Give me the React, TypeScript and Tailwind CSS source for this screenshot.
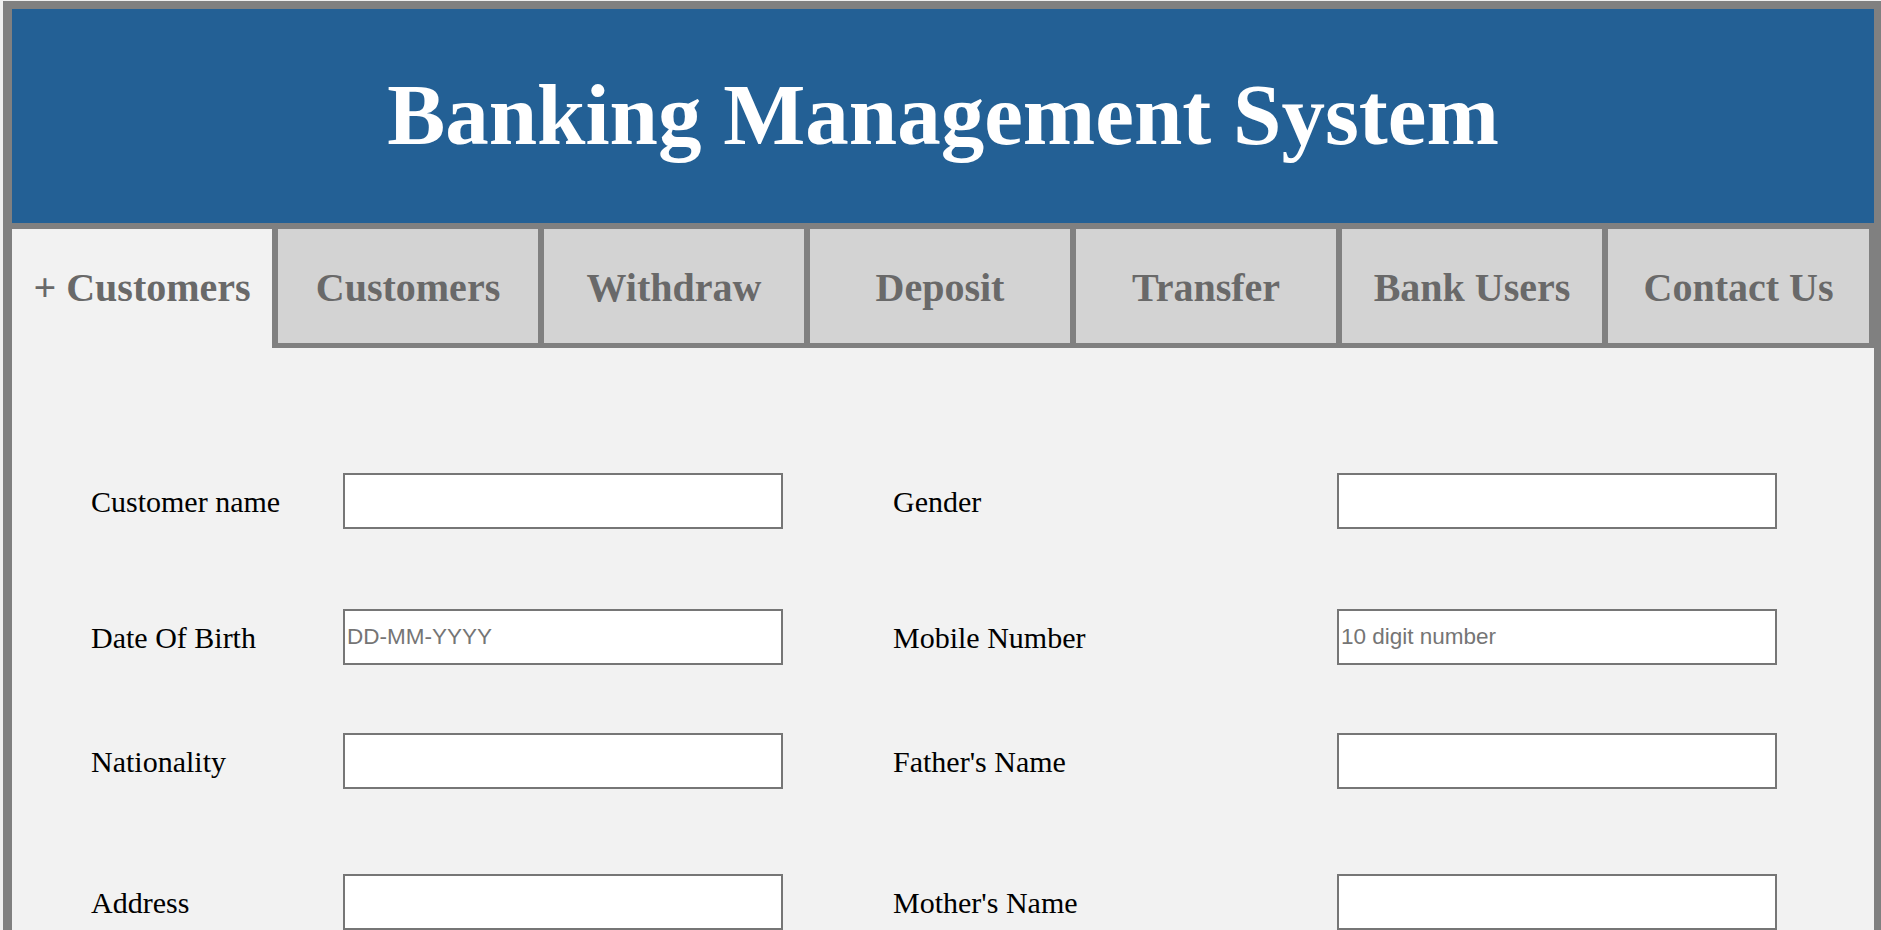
import React from "react";

const serif = { fontFamily: '"Liberation Serif", "Times New Roman", serif' };

const tabs = ["Customers", "Withdraw", "Deposit", "Transfer", "Bank Users"];

function Field({ label, placeholder, labelW }: { label: string; placeholder?: string; labelW: string }) {
  return (
    <div className="flex items-center h-[56px]">
      <div className={`${labelW} shrink-0 pt-[2px] text-[30px] leading-[1.15] text-black font-['Liberation_Serif',serif]`}>{label}</div>
      <input
        type="text"
        placeholder={placeholder}
        className="w-[440px] h-[56px] shrink-0 bg-white border-2 border-[#767676] px-[2px] text-[22.5px] text-black placeholder:text-[#757575] outline-none font-['Liberation_Sans',Arial,sans-serif]"
      />
    </div>
  );
}

function Row({ left, right, lp, rp, mt }: { left: string; right: string; lp?: string; rp?: string; mt: string }) {
  return (
    <div className={`flex ${mt}`}>
      <Field label={left} placeholder={lp} labelW="w-[252px]" />
      <div className="w-[110px] shrink-0" />
      <Field label={right} placeholder={rp} labelW="w-[444px]" />
    </div>
  );
}

export default function App() {
  return (
    <div className="min-h-screen bg-[#f0f0f0] pl-[3px] pt-[1px] overflow-hidden" style={serif}>
      <div className="w-[1878px] border-l-[9px] border-t-[8px] border-r-[7px] border-[#808080] bg-[#f2f2f2]">
        <header className="h-[220px] bg-[#236095] border-b-[6px] border-[#808080] flex items-center justify-center pb-[4px]">
          <h1 className="text-[87px] leading-none font-bold text-white font-['Liberation_Serif',serif]">
            Banking Management System
          </h1>
        </header>
        <nav className="flex h-[119px]">
          <div className="w-[260px] shrink-0 flex items-center justify-center pt-[3px] bg-[#f2f2f2] border-b-[5px] border-[#f2f2f2] text-[40px] leading-none font-bold text-[#696969] font-['Liberation_Serif',serif]">
            + Customers
          </div>
          {tabs.map((t) => (
            <div
              key={t}
              className="w-[266px] shrink-0 flex items-center justify-center pt-[3px] bg-[#d3d3d3] border-l-[6px] border-b-[5px] border-[#808080] text-[40px] leading-none font-bold text-[#696969] font-['Liberation_Serif',serif]"
            >
              {t}
            </div>
          ))}
          <div className="flex-1 flex items-center justify-center pt-[3px] bg-[#d3d3d3] border-l-[6px] border-r-[5px] border-b-[5px] border-[#808080] text-[40px] leading-none font-bold text-[#696969] font-['Liberation_Serif',serif]">
            Contact Us
          </div>
        </nav>
        <main className="pl-[79px] pb-[200px]">
          <Row mt="mt-[125px]" left="Customer name" right="Gender" />
          <Row mt="mt-[80px]" left="Date Of Birth" right="Mobile Number" lp="DD-MM-YYYY" rp="10 digit number" />
          <Row mt="mt-[68px]" left="Nationality" right="Father's Name" />
          <Row mt="mt-[85px]" left="Address" right="Mother's Name" />
        </main>
      </div>
    </div>
  );
}
